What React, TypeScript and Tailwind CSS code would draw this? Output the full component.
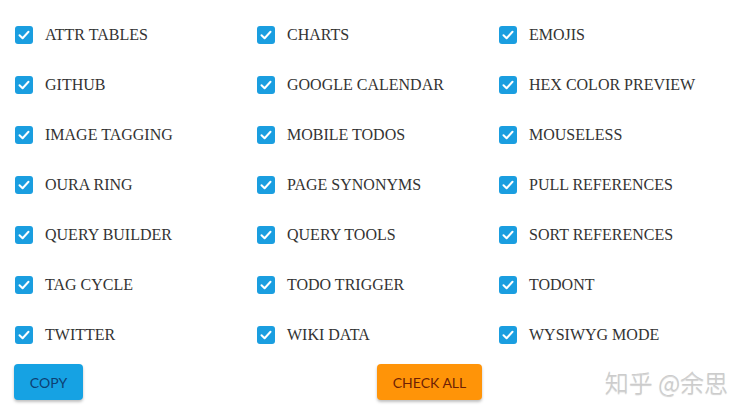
import React from 'react';

const items = [
  'ATTR TABLES', 'CHARTS', 'EMOJIS',
  'GITHUB', 'GOOGLE CALENDAR', 'HEX COLOR PREVIEW',
  'IMAGE TAGGING', 'MOBILE TODOS', 'MOUSELESS',
  'OURA RING', 'PAGE SYNONYMS', 'PULL REFERENCES',
  'QUERY BUILDER', 'QUERY TOOLS', 'SORT REFERENCES',
  'TAG CYCLE', 'TODO TRIGGER', 'TODONT',
  'TWITTER', 'WIKI DATA', 'WYSIWYG MODE',
];

function CheckBox() {
  return (
    <div className="w-[18px] h-[18px] rounded-[3px] bg-[#1a9ee0] flex items-center justify-center shrink-0">
      <svg width="12" height="10" viewBox="0 0 12 10" fill="none">
        <path d="M1.5 5.2 L4.6 8.2 L10.5 1.8" stroke="white" strokeWidth="2" strokeLinecap="round" strokeLinejoin="round" />
      </svg>
    </div>
  );
}

export default function App() {
  return (
    <div className="w-[746px] h-[414px] bg-white pt-[10px] pl-[15px] relative overflow-hidden">
      <div className="grid grid-cols-[242px_242px_242px] auto-rows-[50px]">
        {items.map((name) => (
          <div key={name} className="flex items-center">
            <CheckBox />
            <span className="ml-[12px] text-[16px] text-[#333333] [font-family:'Liberation_Serif',serif] leading-none">
              {name}
            </span>
          </div>
        ))}
      </div>
      <div className="flex items-center mt-[4px] -ml-[1px]">
        <button className="h-[36px] w-[69px] rounded-[4px] bg-[#16a2e3] text-[#0d3f73] text-[14px] [font-family:'Lato',sans-serif] shadow-[0_2px_3px_rgba(0,0,0,0.25)]">
          COPY
        </button>
        <button className="ml-[294px] h-[36px] w-[105px] rounded-[4px] bg-[#ff9408] text-[#6e1f05] text-[14px] [font-family:'Lato',sans-serif] shadow-[0_2px_3px_rgba(0,0,0,0.25)]">
          CHECK ALL
        </button>
        <span className="ml-auto mr-[18px] text-[24px] font-light text-[#cccccc] [font-family:'Noto_Sans_CJK_SC',sans-serif] [text-shadow:0_1px_1px_rgba(0,0,0,0.2)]">
          知乎 @余思
        </span>
      </div>
    </div>
  );
}
